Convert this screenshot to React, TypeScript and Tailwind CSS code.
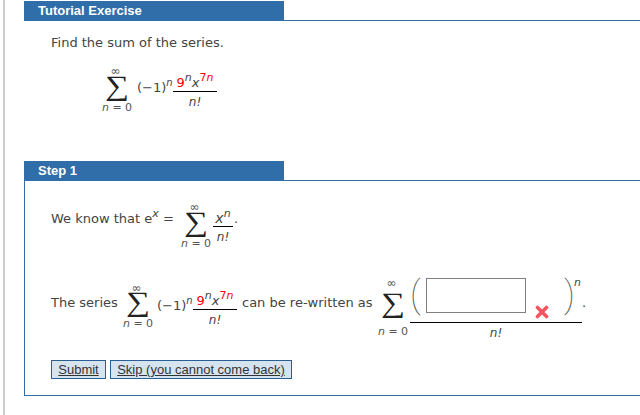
const font = "font-['DejaVu_Sans',sans-serif]";

// mid/bot tweak the gaps between the limit, the sigma and n = 0
function Sum({className, mid = "", bot = ""}: {className?: string; mid?: string; bot?: string}) {
  return (
    <span className={`flex flex-col items-center w-[30px] shrink-0 ${className ?? ""}`}>
      <span className="text-[12px] leading-[10px] text-[#555] -ml-[3px]">∞</span>
      <span className={`font-['Liberation_Serif',serif] text-[28px] leading-[24px] text-[#222] relative -top-[3px] scale-x-[1.2] ${mid}`}>∑</span>
      <span className={`text-[11px] leading-[14px] text-[#555] whitespace-nowrap ${bot}`}><i>n</i> = 0</span>
    </span>
  );
}

function Frac({top, className}: {top: React.ReactNode; className?: string}) {
  return (
    <span className={`flex flex-col items-center shrink-0 ${className ?? ""}`}>
      <span className="h-[21px] border-b border-black w-full text-center leading-[24px] whitespace-nowrap">{top}</span>
      <span className="italic leading-[18px] text-[12px] mt-px">n!</span>
    </span>
  );
}

function Term({className, fracTop}: {className: string; fracTop: string}) {
  return (
    <>
      <span className={`w-[36px] shrink-0 whitespace-nowrap text-[13px] leading-[18px] ${className}`}>
        (−1)<span className="text-[10px] italic relative -top-[6px]">n</span>
      </span>
      <Frac
        className={`w-[44px] ${fracTop}`}
        top={
          <>
            <span className="text-[#f00] text-[13px]">9</span>
            <span className="text-[11px] italic relative -top-[6px]">n</span>
            <i className="text-[13px]">x</i>
            <span className="text-[11px] text-[#f00] relative -top-[6px]">7<i>n</i></span>
          </>
        }
      />
    </>
  );
}

function Header({title}: {title: string}) {
  return (
    <div className="flex border-b border-[#2f6ea9]">
      <div className="w-[260px] h-[19px] bg-[#2f6ea9] text-white font-['Liberation_Sans',sans-serif] font-bold text-[13px] leading-[19px] pl-[14px]">{title}</div>
    </div>
  );
}

export default function App() {
  return (
    <div className={`w-[640px] h-[415px] bg-white overflow-hidden text-[13px] text-[#444] ${font}`}>
      <div className="ml-[3px] border-l-2 border-[#ccc] h-[415px] pl-[19px] pt-px">
        <Header title="Tutorial Exercise" />
        <div className="pl-[27px]">
          <p className="mt-[13px] leading-[18px]">Find the sum of the series.</p>
          <div className="mt-[14px] ml-[51px] flex items-start">
            <Sum mid="mt-px" />
            <Term className="ml-[5px] mt-[13px]" fracTop="mt-[5px]" />
          </div>
        </div>

        <div className="mt-[46px]">
          <Header title="Step 1" />
          <div className="border-l border-b border-[#2f6ea9] h-[215px] pl-[26px] pt-[21px]">
            <div className="flex items-start">
              <span className="w-[130px] shrink-0 mt-[8px] leading-[18px] whitespace-nowrap">
                We know that e<span className="text-[11px] italic relative -top-[6px]">x</span> =
              </span>
              <Sum mid="mt-px" />
              <Frac
                className="ml-[2px] w-[20px] mt-[4px]"
                top={<i className="text-[14px]">x<span className="text-[11px] relative -top-[6px]">n</span></i>}
              />
              <span className="ml-px mt-[8px] leading-[18px]">.</span>
            </div>

            <div className="mt-[26px] flex items-start">
              <span className="w-[72px] shrink-0 mt-[17px] leading-[18px] whitespace-nowrap">The series</span>
              <Sum className="mt-[6px]" />
              <Term className="ml-[4px] mt-[20px]" fracTop="mt-[12px]" />
              <span className="ml-[5px] w-[136px] shrink-0 mt-[17px] leading-[18px] whitespace-nowrap">can be re-written as</span>
              <Sum className="mt-px" mid="mt-[6px]" bot="mt-[7px]" />
              <span className="ml-[2px] flex flex-col w-[172px] shrink-0">
                <span className="flex items-start h-[46px] border-b border-black">
                  <span className="font-['Roboto',sans-serif] font-thin text-[36px] leading-[36px] text-[#555] w-[16px] shrink-0">(</span>
                  <span className="w-[100px] h-[35px] border border-[#808080] mt-px shrink-0" />
                  <svg className="ml-[9px] mt-[28px] shrink-0" width="14" height="14" viewBox="0 0 14 14">
                    <path d="M2.5 2.5 L11.5 11.5 M11.5 2.5 L2.5 11.5" stroke="#f2555f" strokeWidth="3.6" strokeLinecap="round" />
                  </svg>
                  <span className="ml-[15px] font-['Roboto',sans-serif] font-thin text-[36px] leading-[36px] text-[#555]">)</span>
                </span>
                <span className="text-center italic text-[12px] leading-[18px] mt-px">n!</span>
              </span>
              <span className="text-[11px] italic -ml-[8px] leading-[12px] shrink-0">n</span>
              <span className="ml-px mt-[17px] leading-[18px]">.</span>
            </div>

            <div className="mt-[18px] flex gap-[4px] font-['Liberation_Sans',sans-serif] text-[13px] text-[#333]">
              <button className="h-[19px] w-[55px] bg-[#d6e4f0] border border-[#2a5f96] underline leading-[16px] whitespace-nowrap">Submit</button>
              <button className="h-[19px] w-[182px] bg-[#d6e4f0] border border-[#2a5f96] underline leading-[16px] whitespace-nowrap">Skip (you cannot come back)</button>
            </div>
          </div>
        </div>
      </div>
    </div>
  );
}
